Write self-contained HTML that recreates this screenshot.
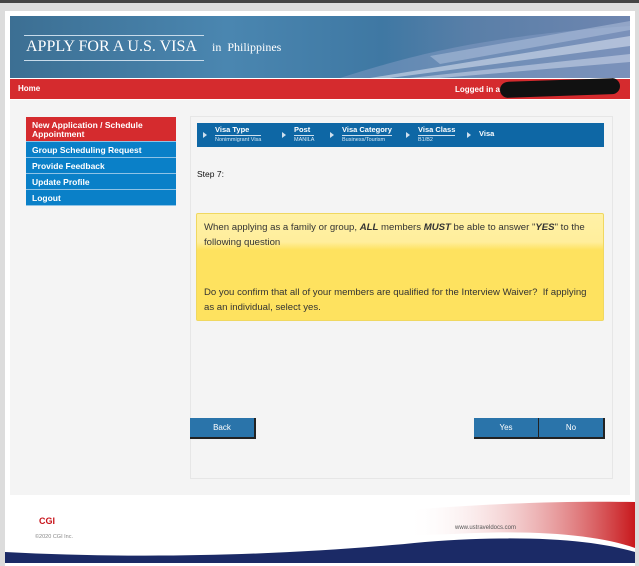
<!DOCTYPE html>
<html><head><style>
*{margin:0;padding:0;box-sizing:border-box}
body{width:639px;height:566px;background:#dcdcdc;font-family:"Liberation Sans",Arial,sans-serif;position:relative;overflow:hidden}
.a{position:absolute}
.page{left:5px;top:11px;width:630px;height:555px;background:#fff}
.banner{left:10px;top:16px;width:620px;height:62px;background:linear-gradient(90deg,#3c6f93 0%,#4a86b0 35%,#3f78a3 60%,#5a7fa8 75%,#6f86b0 100%)}
.nav{left:10px;top:79px;width:620px;height:20px;background:#d52b2e;color:#fff;font-size:8px;font-weight:bold}
.content{left:10px;top:100px;width:620px;height:395px;background:#f4f4f4}
.side div{position:absolute;left:26px;width:150px;color:#fff;font-size:8.5px;font-weight:bold;padding-left:6px;border-bottom:1px solid #8fc3e6}
.blue{background:#0a80c8}
.btn{background:#2a74aa;color:#fff;font-size:8px;text-align:center;line-height:20px;border-right:2px solid #222;border-bottom:2px solid #222;height:21px}
.bc{color:#fff;font-size:7.5px;font-weight:bold}
.bc small{display:block;font-size:5.5px;font-weight:normal;border-top:1px solid #cfe0ee;margin-top:1px;padding-top:1px;color:#d8e8f4}
.tri{width:0;height:0;border-left:4px solid #cfe0ee;border-top:3px solid transparent;border-bottom:3px solid transparent}
</style></head><body>
<div class="a" style="left:0;top:0;width:639px;height:3px;background:#444"></div>
<div class="a page"></div>
<div class="a banner">
<svg class="a" style="left:0;top:0" width="620" height="62"><path d="M330 62 C400 40 470 20 620 10 L620 62Z" fill="#8aa0c8" opacity=".45"/><path d="M360 62 L620 20 L620 30 L380 62Z" fill="#e8eef8" opacity=".5"/><path d="M400 62 L620 38 L620 46 L430 62Z" fill="#d8e0f0" opacity=".5"/><path d="M420 40 L620 5 L620 14 L430 48Z" fill="#c9d4ea" opacity=".4"/></svg>
</div>
<div class="a" style="left:24px;top:35px;width:180px;height:1px;background:#c8dbea"></div>
<div class="a" style="left:26px;top:38px;color:#fff;font-family:'Liberation Serif',serif;font-size:16px;white-space:nowrap">APPLY FOR A U.S. VISA</div>
<div class="a" style="left:24px;top:60px;width:180px;height:1px;background:#c8dbea"></div>
<div class="a" style="left:212px;top:40px;color:#fff;font-family:'Liberation Serif',serif;font-size:12px;white-space:nowrap">in&nbsp; Philippines</div>
<div class="a nav"><span class="a" style="left:8px;top:5px">Home</span><span class="a" style="left:445px;top:6px">Logged in as</span></div>
<div class="a" style="left:500px;top:80px;width:120px;height:16px;background:#111;border-radius:8px;transform:rotate(-2deg)"></div>
<div class="a content"></div>
<div class="side">
<div style="top:117px;height:25px;background:#d52b2e;line-height:9px;padding-top:4px">New Application / Schedule Appointment</div>
<div class="blue" style="top:142px;height:16px;line-height:16px">Group Scheduling Request</div>
<div class="blue" style="top:158px;height:16px;line-height:16px">Provide Feedback</div>
<div class="blue" style="top:174px;height:16px;line-height:16px">Update Profile</div>
<div class="blue" style="top:190px;height:16px;line-height:16px">Logout</div>
</div>
<div class="a" style="left:190px;top:116px;width:423px;height:363px;border:1px solid #e6e6e6;background:#f4f4f4"></div>
<div class="a" style="left:197px;top:123px;width:407px;height:24px;background:#0e67a5"></div>
<div class="a tri" style="left:203px;top:132px"></div>
<div class="a bc" style="left:215px;top:125px">Visa Type<small>Nonimmigrant Visa</small></div>
<div class="a tri" style="left:282px;top:132px"></div>
<div class="a bc" style="left:294px;top:125px">Post<small>MANILA</small></div>
<div class="a tri" style="left:330px;top:132px"></div>
<div class="a bc" style="left:342px;top:125px">Visa Category<small>Business/Tourism</small></div>
<div class="a tri" style="left:406px;top:132px"></div>
<div class="a bc" style="left:418px;top:125px">Visa Class<small>B1/B2</small></div>
<div class="a tri" style="left:467px;top:132px"></div>
<div class="a bc" style="left:479px;top:129px">Visa</div>
<div class="a" style="left:197px;top:169px;font-size:8.5px;color:#111">Step 7:</div>
<div class="a" style="left:196px;top:213px;width:408px;height:108px;border-radius:2px;background:linear-gradient(#fff1a6 0,#ffee9c 28px,#fee25f 36px,#fee25f 100%);border:1px solid #f0d860;font-size:9.6px;color:#333;line-height:15px">
<div class="a" style="left:7px;top:6px;width:385px"> When applying as a family or group, <b><i>ALL</i></b> members <b><i>MUST</i></b> be able to answer "<b><i>YES</i></b>" to the following question</div>
<div class="a" style="left:7px;top:71px;width:392px">Do you confirm that all of your members are qualified for the Interview Waiver?&nbsp; If applying as an individual, select yes.</div>
</div>
<div class="a btn" style="left:190px;top:418px;width:66px">Back</div>
<div class="a btn" style="left:474px;top:418px;width:66px">Yes</div>
<div class="a btn" style="left:539px;top:418px;width:66px">No</div>
<svg class="a" style="left:5px;top:498px" width="630" height="68">
<defs><linearGradient id="r" x1="0" x2="1"><stop offset="0.4" stop-color="#fff" stop-opacity="0"/><stop offset="1" stop-color="#c8181c"/></linearGradient></defs>
<path d="M250 30 C380 10 520 2 630 4 L630 60 C560 40 480 30 380 40 C330 44 290 46 250 46Z" fill="url(#r)"/>
<path d="M0 50 C150 58 300 52 420 40 C520 32 590 38 630 52 L630 65 L0 65Z" fill="#1b2a66"/>
<path d="M0 48 C150 56 300 50 420 38 C520 30 590 36 630 50 L630 54 C590 42 520 36 420 44 C300 56 150 62 0 54Z" fill="#fff"/>
</svg>
<div class="a" style="left:39px;top:516px;color:#c8141b;font-size:9px;font-weight:bold">CGI</div>
<div class="a" style="left:35px;top:534px;color:#888;font-size:5.5px">©2020 CGI Inc.</div>
<div class="a" style="left:455px;top:525px;color:#555;font-size:6px">www.ustraveldocs.com</div>
</body></html>
